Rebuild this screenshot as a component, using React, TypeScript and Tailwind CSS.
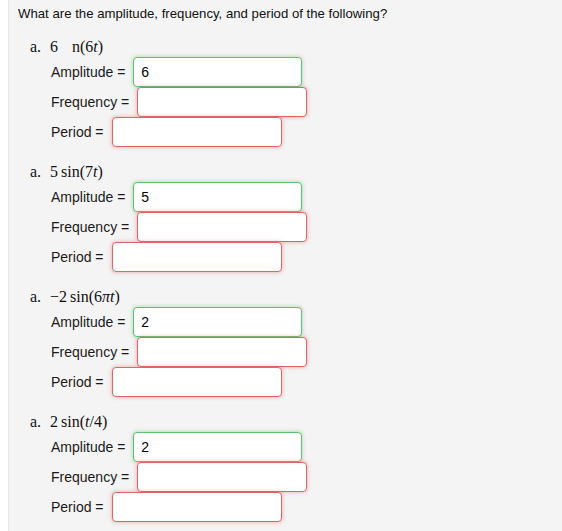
const sans = { fontFamily: '"Liberation Sans", Arial, Helvetica, sans-serif' }
const serif = { fontFamily: '"Liberation Serif", "DejaVu Serif", serif' }

type Problem = {
  expr: React.ReactNode
  amplitude: string
}

const problems: Problem[] = [
  {
    expr: (
      <>
        <span>6</span>
        <span className="ml-[14px]">n</span>
        <span>(6</span>
        <i>t</i>
        <span>)</span>
      </>
    ),
    amplitude: '6',
  },
  {
    expr: (
      <>
        <span>5</span>
        <span className="ml-[3px]">sin</span>
        <span>(7</span>
        <i>t</i>
        <span>)</span>
      </>
    ),
    amplitude: '5',
  },
  {
    expr: (
      <>
        <span>−2</span>
        <span className="ml-[3px]">sin</span>
        <span>(6</span>
        <i>πt</i>
        <span>)</span>
      </>
    ),
    amplitude: '2',
  },
  {
    expr: (
      <>
        <span>2</span>
        <span className="ml-[3px]">sin</span>
        <span>(</span>
        <i>t</i>
        <span>/4)</span>
      </>
    ),
    amplitude: '2',
  },
]

function Field({ label, value, ok }: { label: string; value: string; ok: boolean }) {
  return (
    <div className="flex h-[30px] items-center gap-2">
      <span className="text-[14px] text-[#1a1a1a]">{label}</span>
      <input
        readOnly
        value={value}
        className={
          ok
            ? 'h-[30px] w-[169px] rounded-[4px] border border-[#62c072] bg-white px-[7px] text-[14px] text-black shadow-[0_0_4px_rgba(92,184,92,0.55)] outline-none'
            : 'h-[30px] w-[170px] rounded-[4px] border border-[#e06666] bg-white px-[7px] text-[14px] text-black shadow-[0_0_4px_rgba(224,102,102,0.55)] outline-none'
        }
        style={sans}
      />
    </div>
  )
}

export default function App() {
  return (
    <div className="min-h-[531px] bg-white pl-2" style={sans}>
      <div className="min-h-[531px] border-l border-[#e6e6e6] bg-[#f4f4f4] pl-[9px] pt-[6px]">
        <p className="text-[13.2px] leading-[16px] text-[#111]">
          What are the amplitude, frequency, and period of the following?
        </p>
        <div className="mt-[15px] flex flex-col gap-[15px] pl-[12px]">
          {problems.map((p, i) => (
            <div key={i}>
              <div className="flex h-[20px] items-center text-[16px] text-[#111]" style={serif}>
                <span className="w-[20px]">a.</span>
                {p.expr}
              </div>
              <div className="pl-[21px]">
                <Field label="Amplitude =" value={p.amplitude} ok />
                <Field label="Frequency =" value="" ok={false} />
                <Field label="Period =" value="" ok={false} />
              </div>
            </div>
          ))}
        </div>
      </div>
    </div>
  )
}
